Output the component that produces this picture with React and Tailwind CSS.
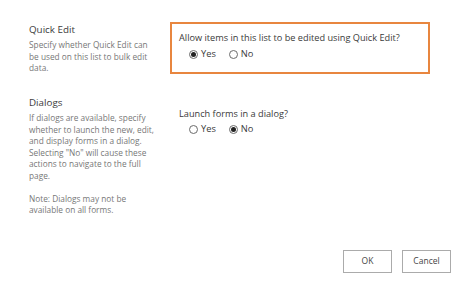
import React from 'react';

function Radio({ label, checked }) {
  return (
    <label className="flex items-center gap-[3px]">
      <span className="flex h-[9px] w-[9px] items-center justify-center rounded-full border border-[#6b6b6b] bg-white">
        {checked && <span className="h-[5px] w-[5px] rounded-full bg-[#222]" />}
      </span>
      <span>{label}</span>
    </label>
  );
}

function RadioRow({ value }) {
  return (
    <div className="flex items-center gap-[13px] pl-[10px] text-[9.3px] leading-[14px] text-[#3a3a3a]">
      <Radio label="Yes" checked={value === 'yes'} />
      <Radio label="No" checked={value === 'no'} />
    </div>
  );
}

export default function App() {
  return (
    <div className="relative flex h-[290px] w-[474px] flex-col bg-white font-['Open_Sans',sans-serif] text-[#333]">
      {/* Quick Edit */}
      <div className="mt-[22px] flex">
        <div className="w-[170px] pl-[29px] pt-[1px]">
          <h3 className="text-[9.8px] leading-[14px] text-[#3b3b3b]">Quick Edit</h3>
          <p className="mt-[2px] w-[128px] text-[8.3px] leading-[11.6px] text-[#777]">
            Specify whether Quick Edit can be used on this list to bulk edit data.
          </p>
        </div>
        <div className="w-[260px] border-2 border-[#e8863f] px-[7px] pt-[7px] pb-[11px]">
          <p className="text-[9.2px] leading-[14px] text-[#3a3a3a]">
            Allow items in this list to be edited using Quick Edit?
          </p>
          <div className="mt-[2px]">
            <RadioRow value="yes" />
          </div>
        </div>
      </div>

      {/* Dialogs */}
      <div className="mt-[22px] flex">
        <div className="w-[170px] pl-[29px]">
          <h3 className="text-[9.8px] leading-[14px] text-[#3b3b3b]">Dialogs</h3>
          <p className="mt-[2px] w-[128px] text-[8.3px] leading-[11.6px] text-[#777]">
            If dialogs are available, specify whether to launch the new, edit, and display forms in a dialog. Selecting "No" will cause these actions to navigate to the full page.
          </p>
          <p className="mt-[11px] w-[128px] text-[8.3px] leading-[11.6px] text-[#777]">
            Note: Dialogs may not be available on all forms.
          </p>
        </div>
        <div className="pl-[9px] pt-[11px]">
          <p className="text-[9.2px] leading-[14px] text-[#3a3a3a]">Launch forms in a dialog?</p>
          <div className="mt-[1px]">
            <RadioRow value="no" />
          </div>
        </div>
      </div>

      {/* Buttons */}
      <div className="mt-auto flex justify-end gap-[10px] pb-[17px] pr-[23px]">
        <button className="h-[23px] w-[49px] border border-[#ababab] bg-white text-[8.5px] text-[#444]">OK</button>
        <button className="h-[23px] w-[49px] border border-[#ababab] bg-white text-[8.5px] text-[#444]">Cancel</button>
      </div>
    </div>
  );
}
